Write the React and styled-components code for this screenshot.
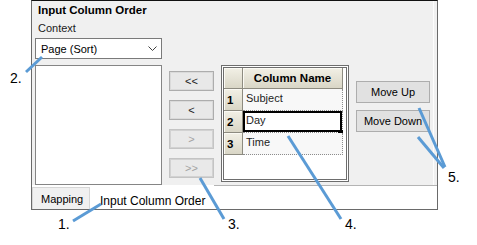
import styled, { createGlobalStyle } from "styled-components";

const GlobalStyle = createGlobalStyle`
  html, body {
    margin: 0;
    background: #fff;
  }
  body {
    font-family: "Liberation Sans", Arial, sans-serif;
    color: #000;
  }
`;

const Stage = styled.div`
  position: relative;
  width: 477px;
  height: 245px;
  padding-left: 31px;
  box-sizing: border-box;
  overflow: hidden;
`;

const Panel = styled.div`
  width: 407px;
  height: 210px;
  box-sizing: border-box;
  border: 1px solid #6a6a6a;
  border-top-color: #111;
  display: flex;
  flex-direction: column;
`;

const Content = styled.div`
  height: 184px;
  box-sizing: border-box;
  padding: 2px 0 0 3px;
  background: #f0f0f0;
  display: flex;
  flex-direction: column;
  box-shadow: inset -3px 0 0 #f0f0f0, inset -4px 0 0 #fdfdfd;
`;

const Title = styled.div`
  font-size: 11.5px;
  font-weight: 700;
  line-height: 14px;
  padding-left: 3px;
`;

const FieldLabel = styled.div`
  font-size: 11px;
  line-height: 14px;
  margin-top: 4px;
  padding-left: 3px;
  color: #1b1b1b;
`;

const MainRow = styled.div`
  display: flex;
  align-items: flex-start;
`;

const LeftColumn = styled.div`
  width: 127px;
  display: flex;
  flex-direction: column;
`;

const SelectBox = styled.div`
  margin-top: 3px;
  height: 21px;
  box-sizing: border-box;
  border: 1px solid #7a7a7a;
  background: #fff;
  display: flex;
  align-items: center;
  justify-content: space-between;
  padding: 0 4px 0 5px;
  font-size: 11px;
  line-height: 14px;
`;

const ListBox = styled.div`
  margin-top: 6px;
  height: 120px;
  box-sizing: border-box;
  border: 1px solid #858585;
  background: #fff;
`;

const ArrowColumn = styled.div`
  margin: 36px 0 0 7px;
  display: flex;
  flex-direction: column;
  gap: 9px;
`;

const ArrowButton = styled.button`
  width: 45px;
  height: 20px;
  padding: 0;
  box-sizing: border-box;
  border: 1px solid ${(p) => (p.disabled ? "#c4c4c4" : "#adadad")};
  box-shadow: inset 0 0 0 1px ${(p) => (p.disabled ? "#d2d2d2" : "#dadada")};
  background: ${(p) => (p.disabled ? "#e9e9e9" : "#e8e8e8")};
  color: ${(p) => (p.disabled ? "#a3a3a3" : "#222")};
  font-family: inherit;
  font-size: 11px;
  line-height: 14px;
  display: flex;
  align-items: center;
  justify-content: center;
`;

const GridFrame = styled.div`
  margin: 30px 0 0 7px;
  width: 128px;
  height: 117px;
  box-sizing: border-box;
  border: 1px solid #6d6d6d;
  padding: 1px;
  background: #fff;
`;

const GridBody = styled.div`
  height: 100%;
  box-sizing: border-box;
  border: 1px solid #6d6d6d;
  background: #fff;
  display: grid;
  grid-template-columns: 19px 100px;
  grid-template-rows: 21px repeat(3, 22px);
  align-content: start;
`;

const HeadCell = styled.div`
  box-sizing: border-box;
  background: linear-gradient(#f2f0e6, #d9d6c6);
  border-right: 1px solid #8d8b80;
  border-bottom: 1px solid #8d8b80;
  box-shadow: inset 1px 1px 0 #fbfaf4;
  font-size: 11.5px;
  font-weight: 700;
  line-height: 14px;
  display: flex;
  align-items: center;
  justify-content: ${(p) => (p.$left ? "flex-start" : "center")};
  padding-left: ${(p) => (p.$left ? "3px" : "0")};
`;

const DataCell = styled.div`
  position: relative;
  box-sizing: border-box;
  padding: 2px 3px;
  font-size: 11px;
  line-height: 14px;
  color: #1e1e1e;
  background: ${(p) => (p.$selected ? "#fff" : "#f8f8f8")};
  border-right: 1px dotted #8c8c8c;
  border-bottom: 1px dotted #8c8c8c;
  box-shadow: ${(p) => (p.$selected ? "inset 0 0 0 2px #000" : "none")};

  &::after {
    content: "";
    display: ${(p) => (p.$selected ? "block" : "none")};
    position: absolute;
    right: -1px;
    bottom: -3px;
    width: 5px;
    height: 5px;
    background: #000;
  }
`;

const RightColumn = styled.div`
  margin: 46px 0 0 7px;
  display: flex;
  flex-direction: column;
  gap: 7px;
`;

const ActionButton = styled.button`
  width: 74px;
  height: 22px;
  padding: 0;
  box-sizing: border-box;
  border: 1px solid #adadad;
  background: #e1e1e1;
  color: #000;
  font-family: inherit;
  font-size: 11px;
  line-height: 14px;
`;

const TabStrip = styled.div`
  height: 24px;
  display: flex;
  background: #fff;
`;

const Tab = styled.div`
  box-sizing: border-box;
  width: ${(p) => (p.$active ? "124px" : "58px")};
  margin-top: ${(p) => (p.$active ? "0" : "2px")};
  padding: ${(p) => (p.$active ? "9px 0 0 10px" : "4px 0 0 8px")};
  background: ${(p) => (p.$active ? "#fff" : "#f0f0f0")};
  border: ${(p) => (p.$active ? "none" : "1px solid #d6d6d6")};
  border-bottom: none;
  font-size: ${(p) => (p.$active ? "12px" : "11px")};
  line-height: 14px;
  white-space: nowrap;
`;

const TabFiller = styled.div`
  flex: 1;
  border-top: 1px solid #b4b4b4;
`;

const Callouts = styled.svg`
  position: absolute;
  left: 0;
  top: 0;
  pointer-events: none;
`;

const CalloutLabel = styled.div`
  position: absolute;
  left: ${(p) => p.$x}px;
  top: ${(p) => p.$y}px;
  font-size: 14px;
  line-height: 14px;
`;

const rows = [
  { n: 1, name: "Subject" },
  { n: 2, name: "Day", selected: true },
  { n: 3, name: "Time" },
];

const lines = [
  [73, 221, 101, 204],
  [26, 72, 42, 57],
  [224, 219, 200, 178],
  [341, 219, 288, 136],
  [445, 167, 419, 108],
  [444, 168, 418, 137],
];

const labels = [
  { t: "1.", x: 58, y: 217 },
  { t: "2.", x: 10, y: 71 },
  { t: "3.", x: 228, y: 217 },
  { t: "4.", x: 345, y: 217 },
  { t: "5.", x: 448, y: 170 },
];

const App = () => {
  return (
    <Stage>
      <GlobalStyle />
      <Panel>
        <Content>
          <Title>Input Column Order</Title>
          <FieldLabel>Context</FieldLabel>
          <MainRow>
            <LeftColumn>
              <SelectBox>
                <span>Page (Sort)</span>
                <svg width="9" height="5" viewBox="0 0 9 5">
                  <polyline points="0.5,0.5 4.5,4.5 8.5,0.5" fill="none" stroke="#404040" strokeWidth="1" />
                </svg>
              </SelectBox>
              <ListBox />
            </LeftColumn>
            <ArrowColumn>
              <ArrowButton>&lt;&lt;</ArrowButton>
              <ArrowButton>&lt;</ArrowButton>
              <ArrowButton disabled>&gt;</ArrowButton>
              <ArrowButton disabled>&gt;&gt;</ArrowButton>
            </ArrowColumn>
            <GridFrame>
              <GridBody>
                <HeadCell />
                <HeadCell>Column Name</HeadCell>
                {rows.map((r) => [
                  <HeadCell key={"h" + r.n} $left>
                    {r.n}
                  </HeadCell>,
                  <DataCell key={"d" + r.n} $selected={r.selected}>
                    {r.name}
                  </DataCell>,
                ])}
              </GridBody>
            </GridFrame>
            <RightColumn>
              <ActionButton>Move Up</ActionButton>
              <ActionButton>Move Down</ActionButton>
            </RightColumn>
          </MainRow>
        </Content>
        <TabStrip>
          <Tab>Mapping</Tab>
          <Tab $active>Input Column Order</Tab>
          <TabFiller />
        </TabStrip>
      </Panel>
      <Callouts width="477" height="245">
        {lines.map(([x1, y1, x2, y2], i) => (
          <line key={i} x1={x1} y1={y1} x2={x2} y2={y2} stroke="#5b9bd5" strokeWidth="3" />
        ))}
      </Callouts>
      {labels.map((l) => (
        <CalloutLabel key={l.t} $x={l.x} $y={l.y}>
          {l.t}
        </CalloutLabel>
      ))}
    </Stage>
  );
};

export default App;
